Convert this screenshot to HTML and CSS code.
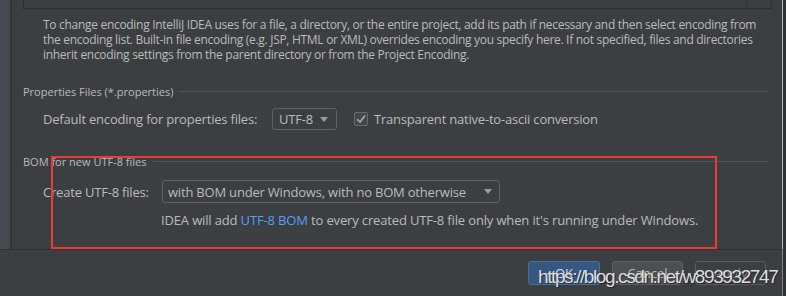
FILE: index.html
```html
<!DOCTYPE html>
<html>
<head>
<meta charset="utf-8">
<link rel="stylesheet" href="styles.css">
</head>
<body>
<div class="window">
  <div class="main">
    <div class="upper">
      <div class="strip"></div>
      <div class="content">
        <div class="table"><div class="col-a"></div><div class="col-b"></div></div>
        <p class="desc">To change encoding IntelliJ IDEA uses for a file, a directory, or the entire project, add its path if necessary and then select encoding from<br>the encoding list. Built-in file encoding (e.g. JSP, HTML or XML) overrides encoding you specify here. If not specified, files and directories<br>inherit encoding settings from the parent directory or from the Project Encoding.</p>

        <div class="section-title sec-props"><span>Properties Files (*.properties)</span></div>
        <div class="row row-props">
          <span class="label label-props">Default encoding for properties files:</span>
          <div class="combo combo-small"><span>UTF-8</span><span class="arrow"></span></div>
          <span class="check">
            <svg width="14" height="14" viewBox="0 0 14 14"><rect x="0.5" y="0.5" width="13" height="13" rx="1.5" fill="#43494a" stroke="#6b6b6b"/><path d="M3.2 7.2 L6 10 L11 3.6" fill="none" stroke="#a9a9a9" stroke-width="1.6"/></svg>
          </span>
          <span class="label">Transparent native-to-ascii conversion</span>
        </div>

        <div class="section-title sec-bom"><span>BOM for new UTF-8 files</span></div>
        <div class="row row-bom">
          <span class="label label-bom">Create UTF-8 files:</span>
          <div class="combo combo-wide"><span>with BOM under Windows, with no BOM otherwise</span><span class="arrow"></span></div>
        </div>
        <p class="info">IDEA will add <span class="link">UTF-8 BOM</span> to every created UTF-8 file only when it's running under Windows.</p>
      </div>
    </div>
    <div class="footer">
      <button class="btn btn-ok">OK</button>
      <button class="btn btn-cancel">Cancel</button>
      <button class="btn btn-apply">Apply</button>
    </div>
  </div>
  <div class="edge"><div class="edge-top"></div><div class="edge-bottom"></div></div>
  <div class="annotation"></div>
  <div class="watermark">https://blog.csdn.net/w893932747</div>
</div>
</body>
</html>
```

FILE: styles.css
```css
* { box-sizing: border-box; }
html, body { margin: 0; padding: 0; }
body {
  background: #3c3f41;
  width: 786px;
  height: 296px;
  overflow: hidden;
  font-family: "Open Sans", "Noto Sans", sans-serif;
  font-size: 13px;
  color: #bbbbbb;
}
.window {
  position: relative;
  display: flex;
  width: 786px;
  height: 296px;
}
.main {
  width: 782px;
  flex-shrink: 0;
  display: flex;
  flex-direction: column;
}
.upper {
  height: 249px;
  display: flex;
}
.strip {
  width: 12px;
  flex-shrink: 0;
  background: #474b51;
  border-right: 2px solid #313335;
}
.content {
  flex: 1;
  min-width: 0;
  padding-left: 11px;
  padding-right: 13px;
}
.table {
  height: 9px;
  width: 749px;
  border: 1px solid #2d2f30;
  border-top: none;
  display: flex;
}
.col-a { width: 723px; border-right: 1px solid #2d2f30; }
.col-b { flex: 1; }
.desc {
  margin: 8px 0 0 20px;
  font-size: 12px;
  line-height: 15px;
  white-space: nowrap;
  letter-spacing: -0.3px;
}
.section-title {
  display: flex;
  align-items: center;
  font-size: 11px;
  line-height: 15px;
}
.section-title::after {
  content: "";
  flex: 1;
  border-top: 1px solid #515557;
  margin-left: 6px;
  margin-top: -1px;
}
.sec-props { margin-top: 22px; }
.sec-bom { margin-top: 24px; }
.row {
  display: flex;
  align-items: center;
  padding-left: 20px;
  letter-spacing: -0.2px;
}
.row-props { margin-top: 9px; }
.row-bom { margin-top: 11px; }
.label { white-space: nowrap; }
.label-props { width: 229px; }
.label-bom { width: 119px; }
.combo {
  display: flex;
  align-items: center;
  justify-content: space-between;
  border: 1px solid #5e6162;
  border-radius: 3px;
  background: #3c3f41;
  white-space: nowrap;
}
.combo-small { width: 65px; height: 22px; padding: 0 8px 0 6px; }
.combo-wide { width: 338px; height: 23px; padding: 0 7px 0 5px; }
.arrow {
  width: 0; height: 0;
  border-left: 4.5px solid transparent;
  border-right: 4.5px solid transparent;
  border-top: 5px solid #9a9da1;
}
.check { display: flex; margin-left: 17px; margin-right: 6px; }
.check svg { display: block; }
.info {
  margin: 9px 0 0 138px;
  line-height: 16px;
  white-space: nowrap;
  letter-spacing: -0.15px;
}
.link { color: #589df6; }
.footer {
  flex: 1;
  border-top: 1px solid #2f3133;
  display: flex;
  justify-content: flex-end;
  align-items: flex-start;
  gap: 12px;
  padding: 11px 16px 0 0;
}
.btn {
  height: 24px;
  width: 71px;
  border-radius: 3px;
  font-family: "Open Sans", "Noto Sans", sans-serif;
  font-size: 13px;
  color: #bbbbbb;
  padding: 0;
}
.btn-ok { width: 72px; background: #365880; border: 1px solid #4a6f93; color: #dddddd; }
.btn-cancel { background: #4c5052; border: 1px solid #5e6060; }
.btn-apply { background: #3c3f41; border: 1px solid #5a5d5f; color: #777777; }
.edge {
  width: 4px;
  flex-shrink: 0;
  display: flex;
  flex-direction: column;
}
.edge-top { height: 249px; border-left: 1px solid #b9bec4; background: #2f3234; }
.edge-bottom { flex: 1; border-left: 1px solid #7e8388; background: #2f3234; }
.annotation {
  position: absolute;
  left: 51px;
  top: 156px;
  width: 666px;
  height: 93px;
  border: 2px solid #ec3a3a;
}
.watermark {
  position: absolute;
  left: 538px;
  top: 267px;
  font-family: "Liberation Sans", Arial, sans-serif;
  font-size: 19px;
  line-height: 20px;
  letter-spacing: -1.4px;
  color: #dedede;
  text-shadow: 1px 1px 1px rgba(0,0,0,0.45);
  white-space: nowrap;
}
```
